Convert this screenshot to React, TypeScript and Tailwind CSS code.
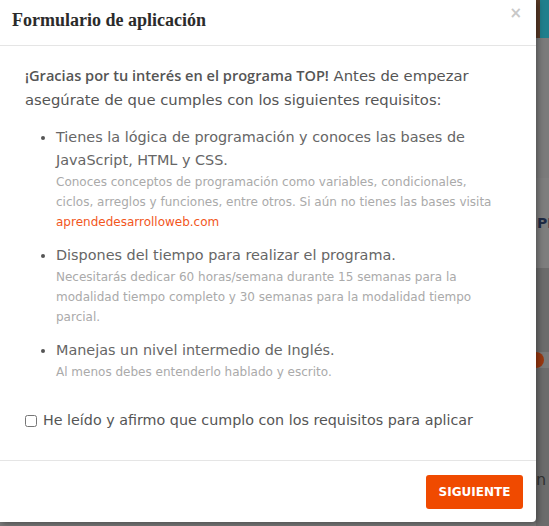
import { useState } from 'react';

const requisitos = [
    {
        title: 'Tienes la lógica de programación y conoces las bases de JavaScript, HTML y CSS.',
        detail: 'Conoces conceptos de programación como variables, condicionales, ciclos, arreglos y funciones, entre otros. Si aún no tienes las bases visita',
        link: 'aprendedesarrolloweb.com',
    },
    {
        title: 'Dispones del tiempo para realizar el programa.',
        detail: 'Necesitarás dedicar 60 horas/semana durante 15 semanas para la modalidad tiempo completo y 30 semanas para la modalidad tiempo parcial.',
    },
    {
        title: 'Manejas un nivel intermedio de Inglés.',
        detail: 'Al menos debes entenderlo hablado y escrito.',
    },
];

export default function App() {
    const [checked, setChecked] = useState(false);

    return (
        <div
            className="flex h-[526px] w-[549px] overflow-hidden bg-[#7a7a7a]"
            style={{ fontFamily: '"DejaVu Sans", sans-serif' }}
        >
            {/* MODAL */}
            <div className="relative z-10 flex h-[522px] w-[536px] shrink-0 flex-col rounded-br-[4px] bg-white shadow-[2px_2px_6px_rgba(0,0,0,0.35)]">
                {/* HEADER */}
                <div className="flex h-[46px] items-center justify-between border-b border-[#e5e5e5] pb-[4px] pl-[12px] pr-[14px]">
                    <h3
                        className="text-[18px] font-bold text-[#2b2b2b]"
                        style={{ fontFamily: '"Liberation Serif", serif' }}
                    >
                        Formulario de aplicación
                    </h3>
                    <button className="-mt-[14px] text-[15px] font-bold leading-none text-[#c8c8c8]">×</button>
                </div>

                {/* BODY */}
                <div className="flex-1 pl-[25px] pr-[30px] pt-[17px] text-[#555]">
                    <p className="text-[14.8px] leading-[24px]">
                        <span
                            className="text-[14.6px] font-semibold"
                            style={{ fontFamily: '"Open Sans", sans-serif' }}
                        >
                            ¡Gracias por tu interés en el programa TOP!
                        </span>{' '}
                        Antes de empezar asegúrate de que cumples con los siguientes requisitos:
                    </p>

                    <ul className="mt-[14px] flex list-disc flex-col gap-[12px] pl-[31px]">
                        {requisitos.map(req => (
                            <li key={req.title} className="text-[14.4px] leading-[23px] text-[#666] marker:text-[#555]">
                                {req.title}
                                <p className="text-[12px] leading-[20px] text-[#aaa]">
                                    {req.detail}
                                    {req.link && (
                                        <>
                                            {' '}
                                            <a className="text-[#f2561d]">{req.link}</a>
                                        </>
                                    )}
                                </p>
                            </li>
                        ))}
                    </ul>

                    <label className="mt-[28px] flex items-center gap-[6px] text-[14.3px] text-[#555]">
                        <input
                            type="checkbox"
                            checked={checked}
                            onChange={e => setChecked(e.target.checked)}
                            className="h-[12px] w-[12px]"
                        />
                        He leído y afirmo que cumplo con los requisitos para aplicar
                    </label>
                </div>

                {/* FOOTER */}
                <div className="flex h-[62px] items-start justify-end border-t border-[#e5e5e5] pr-[13px] pt-[14px]">
                    <button className="h-[34px] w-[97px] rounded-[3px] bg-[#f04a00] text-[12px] font-bold text-white">
                        SIGUIENTE
                    </button>
                </div>
            </div>

            {/* PAGE BEHIND OVERLAY */}
            <div className="flex flex-1 flex-col">
                <div className="flex h-[38px]">
                    <div className="w-[4px] bg-[#5a3a26]" />
                    <div className="flex-1 bg-[#1f7f8c]" />
                </div>
                <div className="h-[140px] bg-[#7b7b7b]" />
                <div className="flex h-[90px] items-center bg-[#7e7e7e] pl-[1px] text-[14px] font-bold text-[#1e2a44]">
                    PI
                </div>
                <div className="h-[84px] bg-[#6c6c6c]" />
                <div className="h-[16px] w-[8px] rounded-r-full bg-[#9a3810]" />
                <div className="flex flex-1 items-start bg-[#6c6c6c] pt-[100px] text-[16px] text-[#333]">
                    n
                </div>
            </div>
        </div>
    );
}
